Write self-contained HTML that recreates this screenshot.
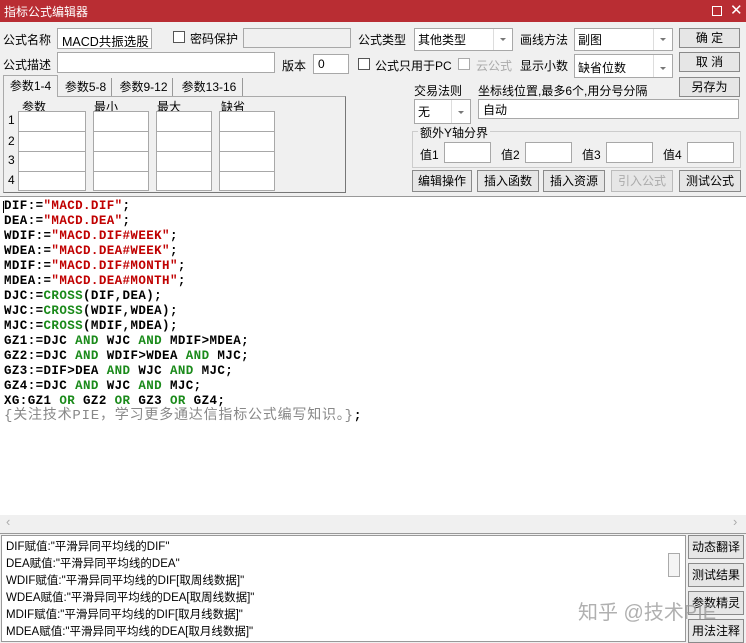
<!DOCTYPE html>
<html><head><meta charset="utf-8"><style>
*{box-sizing:border-box;margin:0;padding:0}
body{width:746px;height:643px;background:#f0f0f0;font-family:"Liberation Sans","Noto Sans CJK SC",sans-serif;font-size:12px;color:#000;position:relative;overflow:hidden}
.a{position:absolute;white-space:nowrap}
.in{position:absolute;background:#fff;border:1px solid #a8a8a8}
.cb{position:absolute;width:12px;height:12px;border:1px solid #555;background:#fff}
.btn{position:absolute;background:#e6e6e6;border:1px solid #8a8a8a;text-align:center;line-height:19px;font-size:12px}
.sel{position:absolute;background:#fff;border:1px solid #a8a8a8;padding-left:3px;line-height:20px}
.sel:after{content:"";position:absolute;right:0;top:0;width:18px;height:100%;border-left:1px solid #ddd}
.sel i{position:absolute;right:6px;top:9px;border-left:3px solid transparent;border-right:3px solid transparent;border-top:3px solid #777}
.code{position:absolute;left:4px;top:199px;font-family:"Liberation Mono","Noto Sans CJK SC",monospace;font-weight:bold;font-size:12.5px;letter-spacing:0.4px;line-height:15px;white-space:pre}
.r{color:#c00000}.g{color:#1a8a1a}.c{color:#888;font-weight:normal;font-size:14px;letter-spacing:0.8px}
</style></head><body>
<div class="a" style="left:0;top:0;width:746px;height:22px;background:#b92d33"></div>
<div class="a" style="left:4px;top:3px;color:#fff;font-size:12px">指标公式编辑器</div>
<div class="a" style="left:712px;top:6px;width:10px;height:10px;border:1px solid #fff"></div>
<div class="a" style="left:730px;top:1px;color:#fff;font-size:15px">✕</div>

<div class="a" style="left:3px;top:31px">公式名称</div>
<div class="in" style="left:57px;top:28px;width:95px;height:21px;padding:2px 0 0 4px;font-size:12.5px">MACD共振选股</div>
<div class="cb" style="left:173px;top:31px"></div>
<div class="a" style="left:190px;top:30px">密码保护</div>
<div class="in" style="left:243px;top:28px;width:108px;height:20px;background:#f0f0f0"></div>
<div class="a" style="left:358px;top:31px">公式类型</div>
<div class="sel" style="left:414px;top:28px;width:99px;height:23px;padding-top:1px">其他类型<i></i></div>
<div class="a" style="left:520px;top:31px">画线方法</div>
<div class="sel" style="left:574px;top:28px;width:99px;height:23px;padding-top:1px">副图<i></i></div>
<div class="btn" style="left:679px;top:28px;width:61px;height:20px">确 定</div>

<div class="a" style="left:3px;top:56px">公式描述</div>
<div class="in" style="left:57px;top:52px;width:218px;height:21px"></div>
<div class="a" style="left:282px;top:57px">版本</div>
<div class="in" style="left:313px;top:54px;width:36px;height:20px;padding:2px 0 0 4px">0</div>
<div class="cb" style="left:358px;top:58px"></div>
<div class="a" style="left:375px;top:57px">公式只用于PC</div>
<div class="cb" style="left:458px;top:58px;border-color:#aaa"></div>
<div class="a" style="left:476px;top:57px;color:#aaa">云公式</div>
<div class="a" style="left:520px;top:57px">显示小数</div>
<div class="sel" style="left:574px;top:54px;width:99px;height:24px;padding-top:3px">缺省位数<i style="top:12px"></i></div>
<div class="btn" style="left:679px;top:52px;width:61px;height:20px">取 消</div>

<div class="a" style="left:3px;top:75px;width:55px;height:22px;border:1px solid #aaa;border-bottom:none;background:#f0f0f0;text-align:center;line-height:20px;z-index:2">参数1-4</div>
<div class="a" style="left:60px;top:78px;width:52px;height:19px;border-right:1px solid #999;text-align:center;line-height:18px">参数5-8</div>
<div class="a" style="left:115px;top:78px;width:58px;height:19px;border-right:1px solid #999;text-align:center;line-height:18px">参数9-12</div>
<div class="a" style="left:176px;top:78px;width:67px;height:19px;border-right:1px solid #999;text-align:center;line-height:18px">参数13-16</div>
<div class="a" style="left:3px;top:96px;width:343px;height:97px;border:1px solid #aaa;border-right-color:#777;border-bottom-color:#777"></div>
<div class="a" style="left:22px;top:98px">参数</div><div class="a" style="left:94px;top:98px">最小</div><div class="a" style="left:157px;top:98px">最大</div><div class="a" style="left:221px;top:98px">缺省</div>
<div class="a" style="left:8px;top:113px">1</div><div class="a" style="left:8px;top:134px">2</div><div class="a" style="left:8px;top:153px">3</div><div class="a" style="left:8px;top:173px">4</div>
<div class="in" style="left:18px;top:111px;width:68px;height:21px"></div><div class="in" style="left:93px;top:111px;width:56px;height:21px"></div><div class="in" style="left:156px;top:111px;width:56px;height:21px"></div><div class="in" style="left:219px;top:111px;width:56px;height:21px"></div>
<div class="in" style="left:18px;top:131px;width:68px;height:21px"></div><div class="in" style="left:93px;top:131px;width:56px;height:21px"></div><div class="in" style="left:156px;top:131px;width:56px;height:21px"></div><div class="in" style="left:219px;top:131px;width:56px;height:21px"></div>
<div class="in" style="left:18px;top:151px;width:68px;height:21px"></div><div class="in" style="left:93px;top:151px;width:56px;height:21px"></div><div class="in" style="left:156px;top:151px;width:56px;height:21px"></div><div class="in" style="left:219px;top:151px;width:56px;height:21px"></div>
<div class="in" style="left:18px;top:171px;width:68px;height:20px"></div><div class="in" style="left:93px;top:171px;width:56px;height:20px"></div><div class="in" style="left:156px;top:171px;width:56px;height:20px"></div><div class="in" style="left:219px;top:171px;width:56px;height:20px"></div>

<div class="btn" style="left:679px;top:77px;width:61px;height:20px">另存为</div>
<div class="a" style="left:414px;top:82px">交易法则</div>
<div class="a" style="left:478px;top:82px">坐标线位置,最多6个,用分号分隔</div>
<div class="sel" style="left:414px;top:99px;width:57px;height:25px;padding-top:2px">无<i style="top:11px"></i></div>
<div class="in" style="left:478px;top:99px;width:261px;height:20px;padding:1px 0 0 4px">自动</div>
<div class="a" style="left:412px;top:131px;width:329px;height:37px;border:1px solid #ccc"></div>
<div class="a" style="left:418px;top:124px;background:#f0f0f0;padding:0 2px">额外Y轴分界</div>
<div class="a" style="left:420px;top:146px">值1</div><div class="in" style="left:444px;top:142px;width:47px;height:21px"></div>
<div class="a" style="left:501px;top:146px">值2</div><div class="in" style="left:525px;top:142px;width:47px;height:21px"></div>
<div class="a" style="left:582px;top:146px">值3</div><div class="in" style="left:606px;top:142px;width:47px;height:21px"></div>
<div class="a" style="left:663px;top:146px">值4</div><div class="in" style="left:687px;top:142px;width:47px;height:21px"></div>
<div class="btn" style="left:412px;top:170px;width:60px;height:22px;line-height:20px">编辑操作</div>
<div class="btn" style="left:477px;top:170px;width:62px;height:22px;line-height:20px">插入函数</div>
<div class="btn" style="left:543px;top:170px;width:62px;height:22px;line-height:20px">插入资源</div>
<div class="btn" style="left:611px;top:170px;width:62px;height:22px;line-height:20px;color:#aaa;border-color:#bbb">引入公式</div>
<div class="btn" style="left:679px;top:170px;width:62px;height:22px;line-height:20px">测试公式</div>

<div class="a" style="left:0;top:196px;width:746px;height:338px;background:#fff;border-top:1px solid #999;border-bottom:1px solid #999"></div>
<div class="a" style="left:0;top:515px;width:746px;height:18px;background:#f0f0f0"></div>
<div class="a" style="left:6px;top:514px;color:#aaa;font-size:13px">‹</div>
<div class="a" style="left:733px;top:514px;color:#aaa;font-size:13px">›</div>
<div class="a" style="left:3px;top:201px;width:1px;height:12px;background:#000"></div>
<div class="code">DIF:=<span class="r">"MACD.DIF"</span>;
DEA:=<span class="r">"MACD.DEA"</span>;
WDIF:=<span class="r">"MACD.DIF#WEEK"</span>;
WDEA:=<span class="r">"MACD.DEA#WEEK"</span>;
MDIF:=<span class="r">"MACD.DIF#MONTH"</span>;
MDEA:=<span class="r">"MACD.DEA#MONTH"</span>;
DJC:=<span class="g">CROSS</span>(DIF,DEA);
WJC:=<span class="g">CROSS</span>(WDIF,WDEA);
MJC:=<span class="g">CROSS</span>(MDIF,MDEA);
GZ1:=DJC <span class="g">AND</span> WJC <span class="g">AND</span> MDIF&gt;MDEA;
GZ2:=DJC <span class="g">AND</span> WDIF&gt;WDEA <span class="g">AND</span> MJC;
GZ3:=DIF&gt;DEA <span class="g">AND</span> WJC <span class="g">AND</span> MJC;
GZ4:=DJC <span class="g">AND</span> WJC <span class="g">AND</span> MJC;
XG:GZ1 <span class="g">OR</span> GZ2 <span class="g">OR</span> GZ3 <span class="g">OR</span> GZ4;
<span class="c">{关注技术PIE，学习更多通达信指标公式编写知识。}</span>;</div>

<div class="a" style="left:1px;top:535px;width:685px;height:107px;background:#fff;border:1px solid #999"></div>
<div class="a" style="left:668px;top:553px;width:12px;height:24px;border:1px solid #aaa;background:#f4f4f4"></div>
<div class="a" style="left:6px;top:539px;line-height:17px;font-size:11.5px">DIF赋值:"平滑异同平均线的DIF"<br>DEA赋值:"平滑异同平均线的DEA"<br>WDIF赋值:"平滑异同平均线的DIF[取周线数据]"<br>WDEA赋值:"平滑异同平均线的DEA[取周线数据]"<br>MDIF赋值:"平滑异同平均线的DIF[取月线数据]"<br>MDEA赋值:"平滑异同平均线的DEA[取月线数据]"</div>
<div class="btn" style="left:688px;top:535px;width:56px;height:24px;line-height:22px">动态翻译</div>
<div class="btn" style="left:688px;top:563px;width:56px;height:24px;line-height:22px">测试结果</div>
<div class="btn" style="left:688px;top:591px;width:56px;height:24px;line-height:22px">参数精灵</div>
<div class="btn" style="left:688px;top:619px;width:56px;height:24px;line-height:22px">用法注释</div>
<div class="a" style="left:578px;top:596px;font-size:20px;color:rgba(150,150,150,0.75)">知乎 @技术PIE</div>
</body></html>
